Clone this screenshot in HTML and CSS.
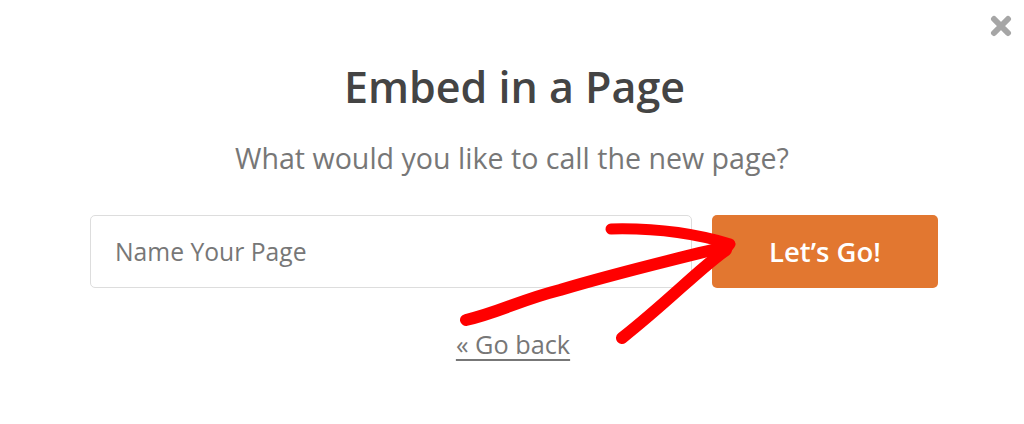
FILE: index.html
```html
<!DOCTYPE html>
<html lang="en">
<head>
<meta charset="utf-8">
<title>Embed in a Page</title>
<link rel="stylesheet" href="styles.css">
</head>
<body>
<div class="modal">
  <button class="close" aria-label="Close">
    <svg width="22" height="22" viewBox="0 0 22 22"><path d="M4 4L18 18M18 4L4 18" stroke="#a6a6a6" stroke-width="6" stroke-linecap="round"/></svg>
  </button>
  <h1 class="title">Embed in a Page</h1>
  <p class="subtitle">What would you like to call the new page?</p>
  <div class="form-row">
    <input class="name-input" type="text" placeholder="Name Your Page">
    <button class="go-btn">Let’s Go!</button>
  </div>
  <a class="back" href="#">« Go back</a>
  <svg class="arrow" width="1024" height="424" viewBox="0 0 1024 424">
    <g fill="none" stroke="#ff0000" stroke-linecap="round" stroke-linejoin="round">
      <path d="M466 320 C 500 312, 520 300, 560 290 C 620 272, 680 258, 728 246" stroke-width="12"/>
      <path d="M611 229 C 650 228, 690 232, 730 244" stroke-width="11"/>
      <path d="M726 250 C 700 268, 670 300, 622 338" stroke-width="12"/>
    </g>
  </svg>
</div>
</body>
</html>
```
FILE: styles.css
```css
html, body {
  margin: 0;
  padding: 0;
  background: #ffffff;
}
body {
  font-family: "Open Sans", "Noto Sans", sans-serif;
  width: 1024px;
  height: 424px;
  overflow: hidden;
}
.modal {
  position: relative;
  width: 1024px;
  height: 424px;
  display: flex;
  flex-direction: column;
  align-items: center;
  box-sizing: border-box;
  padding-top: 59px;
}
.close {
  position: absolute;
  top: 15px;
  right: 12px;
  width: 22px;
  height: 22px;
  padding: 0;
  border: 0;
  background: none;
  cursor: pointer;
}
.close svg { display: block; }
.title {
  margin: 0;
  font-size: 43px;
  font-weight: 600;
  color: #444444;
  line-height: 56px;
  margin-left: 5px;
}
.subtitle {
  margin: 24px 0 0;
  font-size: 28.6px;
  line-height: 38px;
  color: #777777;
}
.form-row {
  margin-top: 38px;
  display: flex;
  gap: 20px;
  margin-left: 4px;
}
.name-input {
  width: 602px;
  height: 73px;
  box-sizing: border-box;
  border: 1px solid #dddddd;
  border-radius: 5px;
  padding: 0 24px;
  font-family: inherit;
  font-size: 24.7px;
  color: #444;
  outline: none;
}
.name-input::placeholder {
  color: #777777;
}
.go-btn {
  width: 226px;
  height: 73px;
  border: 0;
  border-radius: 5px;
  background: #e27730;
  color: #ffffff;
  font-family: inherit;
  font-size: 27.5px;
  font-weight: 600;
  cursor: pointer;
}
.back {
  margin-top: 39px;
  font-size: 25.3px;
  color: #777777;
  text-decoration: underline;
  text-underline-offset: 5px;
  line-height: 34px;
  margin-left: 2px;
}
.arrow {
  position: absolute;
  top: 0;
  left: 0;
  pointer-events: none;
}
```
